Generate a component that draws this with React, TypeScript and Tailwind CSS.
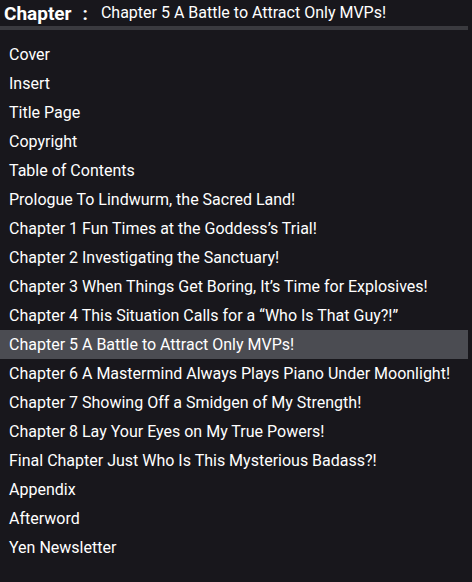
import React from 'react';

const chapters = [
  'Cover',
  'Insert',
  'Title Page',
  'Copyright',
  'Table of Contents',
  'Prologue To Lindwurm, the Sacred Land!',
  'Chapter 1 Fun Times at the Goddess’s Trial!',
  'Chapter 2 Investigating the Sanctuary!',
  'Chapter 3 When Things Get Boring, It’s Time for Explosives!',
  'Chapter 4 This Situation Calls for a “Who Is That Guy?!”',
  'Chapter 5 A Battle to Attract Only MVPs!',
  'Chapter 6 A Mastermind Always Plays Piano Under Moonlight!',
  'Chapter 7 Showing Off a Smidgen of My Strength!',
  'Chapter 8 Lay Your Eyes on My True Powers!',
  'Final Chapter Just Who Is This Mysterious Badass?!',
  'Appendix',
  'Afterword',
  'Yen Newsletter',
];

const current = 10;

export default function App() {
  return (
    <div className="w-[472px] h-[582px] bg-[#18171c] text-white overflow-hidden font-['Roboto',sans-serif]">
      <div className="w-[468px]">
        {/* Header */}
        <div className="flex items-center h-[26px] pl-[4px] whitespace-nowrap">
          <span className="text-[19px] font-bold leading-none">Chapter</span>
          <span className="text-[19px] font-bold leading-none ml-[11px]">:</span>
          <span className="text-[16px] leading-none ml-[13px]">{chapters[current]}</span>
        </div>
        <div className="h-[4px] bg-[#3a3a3f]" />

        {/* Chapter list */}
        <ul className="pt-[10px]">
          {chapters.map((title, i) => (
            <li
              key={title}
              className={`h-[29px] flex items-center pl-[9px] text-[16px] whitespace-nowrap ${
                i === current ? 'bg-[#4b4c52]' : ''
              }`}
            >
              {title}
            </li>
          ))}
        </ul>
      </div>
    </div>
  );
}
